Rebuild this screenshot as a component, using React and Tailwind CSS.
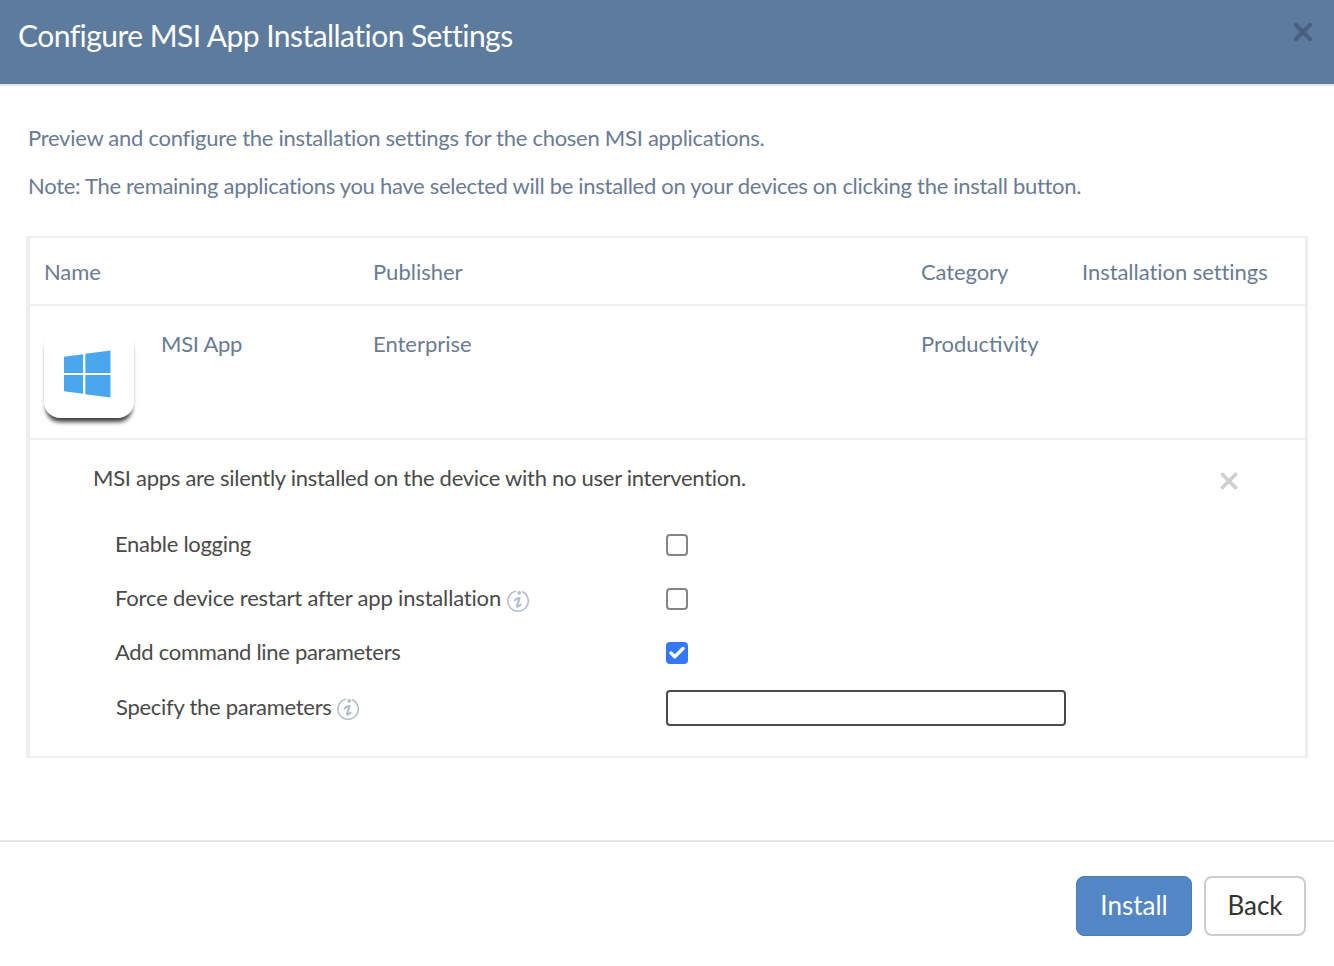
import React from "react";
import { Check, X } from "lucide-react";

const InfoIcon = ({ nudge }) => (
  <svg width="24" height="24" viewBox="0 0 24 24" className={"shrink-0 " + nudge} fill="none">
    <path d="M9.5 2.2 A10.2 10.2 0 1 0 16.4 2.8" stroke="#b4bfce" strokeWidth="1.6" strokeLinecap="round" />
    <circle cx="13.2" cy="3.8" r="1.9" fill="#b4bfce" />
    <path d="M8.8 11.4 C10.2 9.6 12 9 13.6 9.2 L11 16.8 C10.7 18 11.8 18.4 14.6 15.8" stroke="#b4bfce" strokeWidth="2.2" strokeLinecap="round" strokeLinejoin="round" />
  </svg>
);

const WindowsLogo = () => (
  <svg width="47" height="48" viewBox="0 0 48 48" fill="#4aa7ee">
    <path d="M0 6.5 L19.5 3.8 V23 H0 Z" />
    <path d="M21.8 3.4 L47.5 0 V23 H21.8 Z" />
    <path d="M0 25 H19.5 V44.2 L0 41.5 Z" />
    <path d="M21.8 25 H47.5 V48 L21.8 44.6 Z" />
  </svg>
);

const Box = ({ checked }) =>
  checked ? (
    <span className="mt-[2px] w-[22px] h-[22px] rounded-[4px] bg-[#3478f6] flex items-center justify-center">
      <Check size={18} color="white" strokeWidth={4.5} />
    </span>
  ) : (
    <span className="mt-[2px] w-[22px] h-[22px] rounded-[4px] border-2 border-[#858585] bg-white block" />
  );

const SettingRow = ({ label, info, children, indent, tracking }) => (
  <div className={"flex items-center " + (indent ? "h-[56px]" : "h-[54px]")}>
    <div className={"w-[551px] flex items-center " + (indent ? "pl-px" : "")}>
      <span className={tracking}>{label}</span>
      {info && <InfoIcon nudge={indent ? "ml-[4px] mt-[3px]" : "ml-[5px] mt-[5px]"} />}
    </div>
    {children}
  </div>
);

export default function App() {
  return (
    <div className="w-[1334px] h-[966px] bg-white overflow-hidden font-['Lato',sans-serif] text-[22px] leading-[30px] text-[#6b7b93]">
      <div className="h-[86px] bg-[#5d7b9c] border-b-2 border-[#e5e5e5] flex justify-between pl-[18px] pr-[17px]">
        <h1 className="text-white text-[30px] leading-[40px] pt-[15px] tracking-[-0.54px]">Configure MSI App Installation Settings</h1>
        <X size={28} color="#45617f" strokeWidth={3.5} className="mt-[18px]" />
      </div>

      <div className="px-[26px]">
        <p className="pl-[2px] pt-[37px] tracking-[-0.27px]">Preview and configure the installation settings for the chosen MSI applications.</p>
        <p className="pl-[2px] pt-[18px] tracking-[-0.29px]">Note: The remaining applications you have selected will be installed on your devices on clicking the install button.</p>

        <div className="mt-[35px] w-[1282px] h-[522px] border-t-2 border-b-2 border-l-4 border-r-[3px] border-[#eeeef0]">
          <div className="h-[68px] pt-[2px] grid grid-cols-[329px_548px_161px_1fr] items-center pl-[14px] border-b-2 border-[#f0f0f2]">
            <span className="-tracking-[0.1px]">Name</span>
            <span>Publisher</span>
            <span className="-tracking-[0.1px]">Category</span>
            <span className="-tracking-[0.05px]">Installation settings</span>
          </div>

          <div className="h-[134px] grid grid-cols-[329px_548px_161px_1fr] pl-[14px] border-b-2 border-[#f0f0f2]">
            <div className="flex pt-[22px]">
              <div className="w-[90px] h-[90px] rounded-[16px] bg-white shadow-[0_6px_4px_-2px_#3f3f3f] flex items-center justify-center pt-[2px] pr-[4px] mr-[27px]">
                <WindowsLogo />
              </div>
              <span className="pt-[1px] h-fit tracking-[-0.25px]">MSI App</span>
            </div>
            <span className="pt-[23px]">Enterprise</span>
            <span className="pt-[23px]">Productivity</span>
            <span />
          </div>

          <div className="text-[#4a4a4a] relative">
            <p className="pl-[63px] pt-[23px] pb-[24px] tracking-[-0.28px]">MSI apps are silently installed on the device with no user intervention.</p>
            <X size={26} color="#cfcfcf" strokeWidth={3.5} className="absolute left-[1186px] top-[28px]" />
            <div className="pl-[85px]">
              <SettingRow label="Enable logging" tracking="tracking-[-0.28px]"><Box /></SettingRow>
              <SettingRow label="Force device restart after app installation" info tracking="tracking-[-0.17px]"><Box /></SettingRow>
              <SettingRow label="Add command line parameters" tracking="tracking-[-0.3px]"><Box checked /></SettingRow>
              <SettingRow label="Specify the parameters" info indent tracking="tracking-[-0.27px]">
                <input className="mt-[2px] w-[400px] h-[36px] rounded-[4px] border-2 border-[#4a4a4a] bg-white outline-none" />
              </SettingRow>
            </div>
          </div>
        </div>
      </div>

      <div className="mt-[82px] border-t-2 border-[#e5e5e5] flex justify-end gap-[12px] pt-[34px] pr-[28px]">
        <button className="w-[116px] h-[60px] pb-[2px] rounded-[8px] bg-[#5286c4] border border-[#4a7cb8] text-white text-[26px]">Install</button>
        <button className="w-[102px] h-[60px] pb-[2px] rounded-[8px] bg-white border-2 border-[#cccccc] text-[#333333] text-[26px]">Back</button>
      </div>
    </div>
  );
}
